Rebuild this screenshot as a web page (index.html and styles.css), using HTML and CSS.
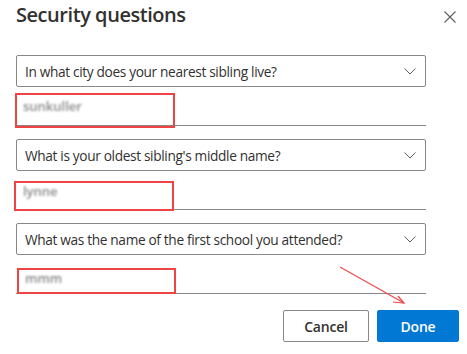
FILE: index.html
```html
<!DOCTYPE html>
<html>
<head>
<meta charset="utf-8">
<link rel="stylesheet" href="styles.css">
</head>
<body>
<div class="dialog">
  <div class="header">
    <h1 class="title">Security questions</h1>
    <button class="close" aria-label="Close">
      <svg width="12" height="12" viewBox="0 0 12 12"><path d="M0.5 0.5 L11.5 11.5 M11.5 0.5 L0.5 11.5" stroke="#605e5c" stroke-width="1.1" fill="none"/></svg>
    </button>
  </div>
  <div class="form">
    <div class="group">
      <div class="select">
        <span class="select-text">In what city does your nearest sibling live?</span>
        <svg class="chev" width="12" height="7" viewBox="0 0 12 7"><path d="M0.5 0.5 L6 6 L11.5 0.5" stroke="#605e5c" stroke-width="1" fill="none"/></svg>
      </div>
      <div class="input">
        <span class="blur blur-1">sunkuller</span>
        <span class="mark mark-1"></span>
      </div>
    </div>
    <div class="group">
      <div class="select">
        <span class="select-text">What is your oldest sibling's middle name?</span>
        <svg class="chev" width="12" height="7" viewBox="0 0 12 7"><path d="M0.5 0.5 L6 6 L11.5 0.5" stroke="#605e5c" stroke-width="1" fill="none"/></svg>
      </div>
      <div class="input">
        <span class="blur blur-2">lynne</span>
        <span class="mark mark-2"></span>
      </div>
    </div>
    <div class="group">
      <div class="select">
        <span class="select-text">What was the name of the first school you attended?</span>
        <svg class="chev" width="12" height="7" viewBox="0 0 12 7"><path d="M0.5 0.5 L6 6 L11.5 0.5" stroke="#605e5c" stroke-width="1" fill="none"/></svg>
      </div>
      <div class="input">
        <span class="blur blur-3">mmm</span>
        <span class="mark mark-3"></span>
      </div>
    </div>
  </div>
  <div class="actions">
    <button class="btn btn-cancel">Cancel</button>
    <button class="btn btn-done">Done</button>
  </div>
  <svg class="arrow" width="80" height="50" viewBox="0 0 80 50">
    <path d="M4 2 L68 38" stroke="#f04848" stroke-width="1.2" fill="none"/>
    <path d="M57 37 L68 38 L62 31" stroke="#f04848" stroke-width="1.2" fill="none"/>
  </svg>
</div>
</body>
</html>
```

FILE: styles.css
```css
* { box-sizing: border-box; }
html, body {
  margin: 0;
  padding: 0;
  background: #ffffff;
}
body {
  font-family: "Open Sans", "Noto Sans", sans-serif;
  color: #323130;
}
.dialog {
  position: relative;
  width: 467px;
  height: 354px;
  padding: 0 8px 0 16px;
}
.header {
  display: flex;
  justify-content: space-between;
  align-items: flex-start;
  height: 55px;
}
.title {
  margin: 0;
  padding-top: 1px;
  font-size: 20px;
  font-weight: 600;
  line-height: 28px;
  letter-spacing: -0.45px;
  color: #323130;
}
.close {
  margin: 11px 3px 0 0;
  padding: 0;
  border: 0;
  background: none;
  width: 12px;
  height: 12px;
  display: flex;
}
.form {
  width: 410px;
  display: flex;
  flex-direction: column;
  gap: 13px;
}
.group {
  display: flex;
  flex-direction: column;
}
.select {
  height: 32px;
  border: 1px solid #8a8886;
  border-radius: 2px;
  display: flex;
  align-items: center;
  justify-content: space-between;
  padding: 0 9px 0 8px;
}
.select-text {
  font-size: 13.7px;
  letter-spacing: -0.35px;
  color: #323130;
}
.chev { flex: none; }
.input {
  position: relative;
  height: 39px;
  border-bottom: 1px solid #8a8886;
  display: flex;
  align-items: center;
  padding-left: 7px;
}
.blur {
  font-size: 13px;
  font-weight: 600;
  color: #8a8a8a;
  filter: blur(1.3px);
}
.blur-1 { margin-top: 0; }
.blur-2 { margin-top: 2px; }
.blur-3 { margin-top: 8px; margin-left: 2px; }
.mark {
  position: absolute;
  border: 2px solid #f04444;
  width: 160px;
}
.mark-1 { left: -1px; top: 6px; height: 35px; }
.mark-2 { left: -2px; top: 10px; height: 30px; }
.mark-3 { left: 1px; top: 13px; height: 26px; width: 159px; }
.actions {
  display: flex;
  justify-content: flex-end;
  gap: 8px;
  margin-top: 16px;
}
.btn {
  height: 32px;
  border-radius: 2px;
  font-family: "Open Sans", "Noto Sans", sans-serif;
  font-size: 14px;
  font-weight: 600;
  padding: 0;
  letter-spacing: -0.2px;
}
.btn-cancel {
  width: 86px;
  background: #ffffff;
  border: 1px solid #8a8886;
  color: #323130;
}
.btn-done {
  width: 82px;
  background: #0078d4;
  border: 1px solid #0078d4;
  color: #ffffff;
}
.arrow {
  position: absolute;
  left: 336px;
  top: 265px;
}
```
